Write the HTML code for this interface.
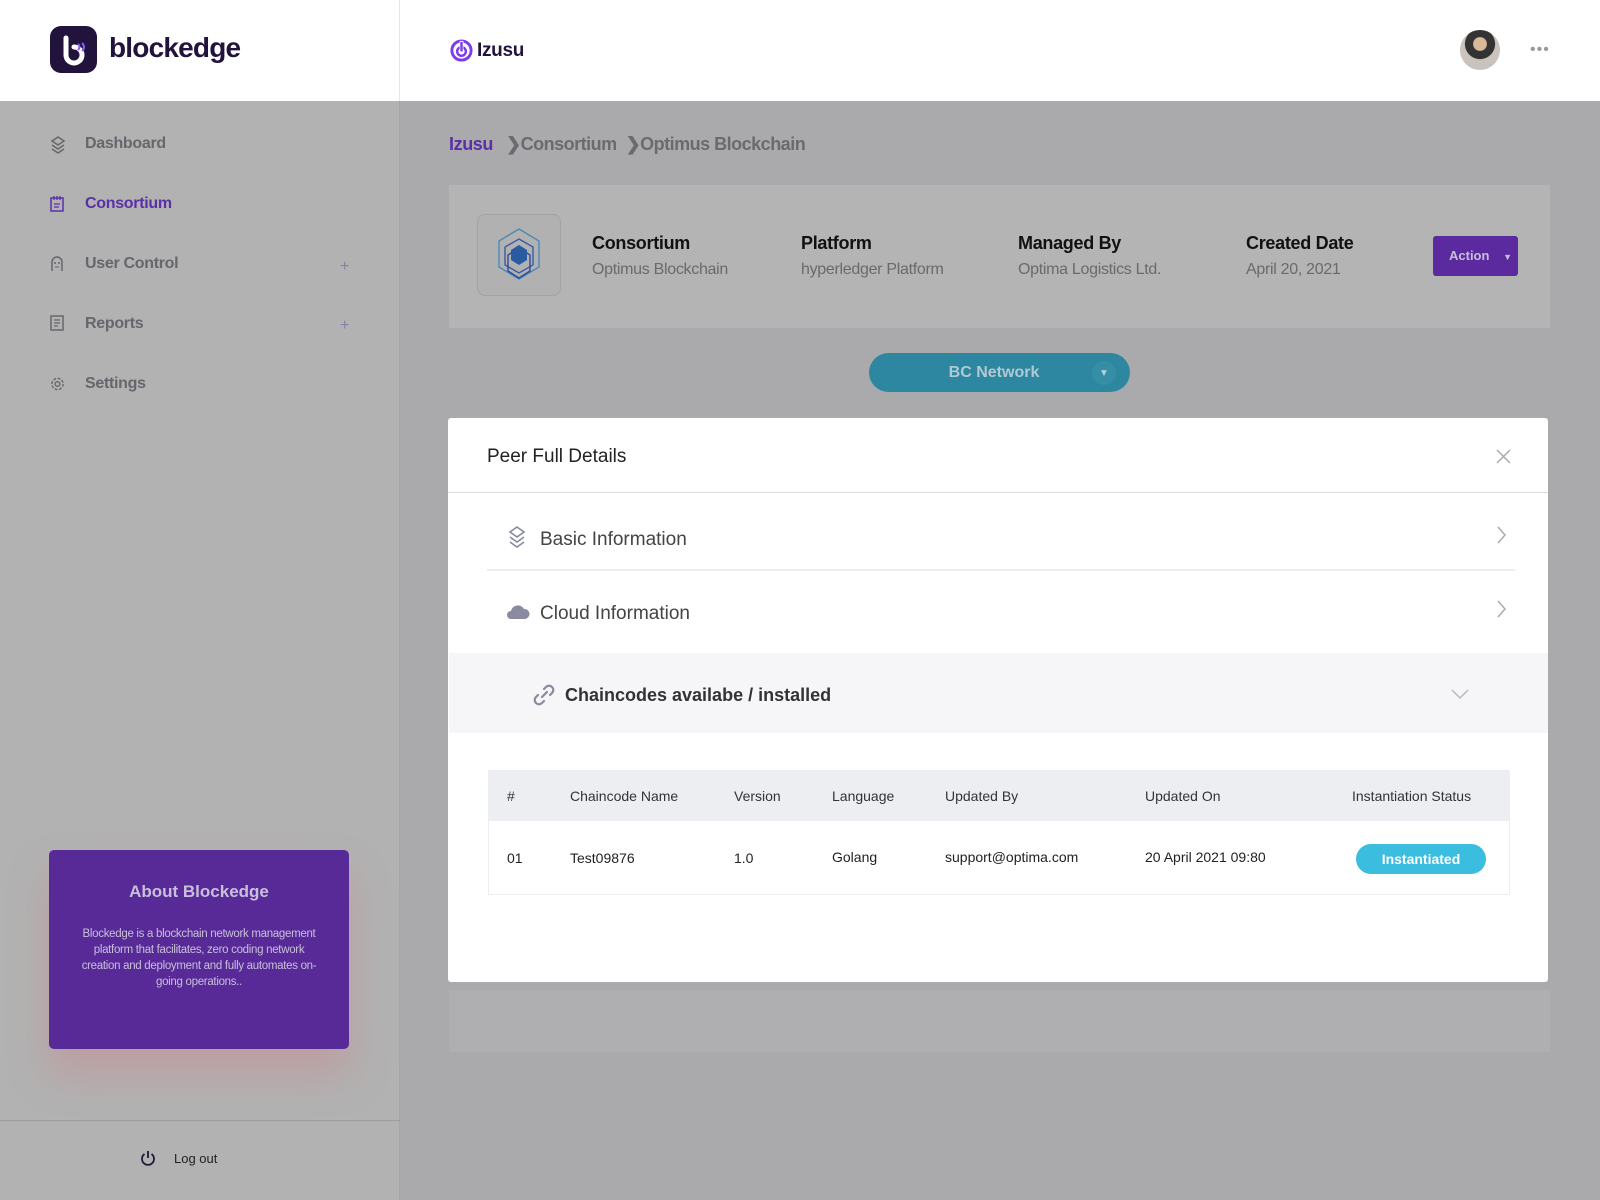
<!DOCTYPE html>
<html><head><meta charset="utf-8"><style>
*{box-sizing:border-box;margin:0;padding:0}
body{width:1600px;height:1200px;position:relative;overflow:hidden;font-family:"Liberation Sans",sans-serif;background:#aaaaad}
.abs{position:absolute}
.hdr{left:0;top:0;width:1600px;height:101px;background:#fff}
.side{left:0;top:101px;width:400px;height:1099px;background:#b2b2b2;border-right:1px solid #a6a6a8}
.nav{left:85px;font-size:16px;color:#66666c;font-weight:bold;transform:translateY(-50%);letter-spacing:-0.3px}
.nicon{left:50px;transform:translateY(-50%)}
.plus{left:340px;color:#8a80a6;font-size:16px;transform:translateY(-50%)}
.lbl{font-size:18px;font-weight:bold;color:#111;letter-spacing:-0.3px}
.val{font-size:16px;color:#6a6a6a;letter-spacing:-0.3px}
</style></head><body>
<div class="abs hdr"></div>
<div class="abs" style="left:399px;top:0;width:1px;height:101px;background:#e6e6e6"></div>
<div class="abs" style="left:50px;top:26px;width:47px;height:47px;border-radius:11px;background:#22133d"></div>
<svg class="abs" style="left:50px;top:26px" width="47" height="47" viewBox="0 0 47 47"><path d="M16 12v17a8 8 0 1 0 8-8" fill="none" stroke="#fff" stroke-width="5" stroke-linecap="round"/><path d="M28 18q3 3 0 6M32 17q4 4 0 8" fill="none" stroke="#8b5cf6" stroke-width="2"/></svg>
<div class="abs" style="left:109px;top:32px;font-size:28px;font-weight:bold;color:#22133d;letter-spacing:-0.8px">blockedge</div>
<svg class="abs" style="left:449px;top:38px" width="25" height="25" viewBox="0 0 26 26"><circle cx="13" cy="13" r="10" fill="none" stroke="#7c3aed" stroke-width="3"/><circle cx="13" cy="14" r="4.5" fill="none" stroke="#7c3aed" stroke-width="2.5"/><path d="M13 3v10" stroke="#fff" stroke-width="4"/><path d="M13 4v10" stroke="#7c3aed" stroke-width="2.5"/></svg>
<div class="abs" style="left:477px;top:40px;font-size:19px;font-weight:bold;color:#22133d;letter-spacing:-0.3px">Izusu</div>
<div class="abs" style="left:1460px;top:30px;width:40px;height:40px;border-radius:50%;background:radial-gradient(circle at 50% 35%,#d9b89a 0 20%,#333 22% 45%,#c9c2bd 47%)"></div>
<div class="abs" style="left:1530px;top:41px;font-size:16px;color:#999;letter-spacing:1px">•••</div>

<div class="abs side"></div>
<svg class="abs nicon" style="top:145px" width="16" height="18" viewBox="0 0 16 18"><path d="M8 1l6 4-6 4-6-4z M2 9l6 4 6-4 M2 13l6 4 6-4" fill="none" stroke="#66666c" stroke-width="1.5"/></svg>
<div class="abs nav" style="top:144px">Dashboard</div>
<svg class="abs nicon" style="top:204px" width="14" height="16" viewBox="0 0 14 16"><rect x="1" y="2" width="12" height="13" fill="none" stroke="#5b2fa8" stroke-width="1.5"/><path d="M4 0v4M7 0v4M10 0v4M4 8h6M4 11h5" stroke="#5b2fa8" stroke-width="1.3"/></svg>
<div class="abs nav" style="top:204px;color:#5b2fa8">Consortium</div>
<svg class="abs nicon" style="top:264px" width="14" height="16" viewBox="0 0 14 16"><path d="M2 15V6a5 5 0 0 1 10 0v9" fill="none" stroke="#66666c" stroke-width="1.5"/><circle cx="5" cy="7" r="1" fill="#66666c"/><circle cx="9" cy="7" r="1" fill="#66666c"/><path d="M5 11h4" stroke="#66666c"/></svg>
<div class="abs nav" style="top:264px">User Control</div>
<div class="abs plus" style="top:267px">+</div>
<svg class="abs nicon" style="top:323px" width="14" height="16" viewBox="0 0 14 16"><rect x="1" y="1" width="12" height="14" fill="none" stroke="#66666c" stroke-width="1.5"/><path d="M4 5h6M4 8h6M4 11h4" stroke="#66666c" stroke-width="1.3"/></svg>
<div class="abs nav" style="top:324px">Reports</div>
<div class="abs plus" style="top:326px">+</div>
<svg class="abs nicon" style="top:384px" width="15" height="15" viewBox="0 0 16 16"><circle cx="8" cy="8" r="2.5" fill="none" stroke="#66666c" stroke-width="1.5"/><circle cx="8" cy="8" r="6" fill="none" stroke="#66666c" stroke-width="1.5" stroke-dasharray="3 1.7"/></svg>
<div class="abs nav" style="top:384px">Settings</div>

<div class="abs" style="left:49px;top:850px;width:300px;height:199px;border-radius:5px;background:#572a98;box-shadow:0 25px 40px rgba(210,120,130,.35)"></div>
<div class="abs" style="left:49px;top:882px;width:300px;text-align:center;font-size:17px;font-weight:bold;color:#c9bfd9">About Blockedge</div>
<div class="abs" style="left:79px;top:926px;width:240px;text-align:center;font-size:11.5px;line-height:16px;color:#c9bfd9;letter-spacing:-0.3px">Blockedge is a blockchain network management platform that facilitates, zero coding network creation and deployment and fully automates on-going operations..</div>
<div class="abs" style="left:0;top:1120px;width:400px;height:1px;background:#9d9d9f"></div>
<svg class="abs" style="left:140px;top:1150px" width="16" height="17" viewBox="0 0 16 17"><path d="M4.5 4a6 6 0 1 0 7 0" fill="none" stroke="#1e1a3a" stroke-width="1.8"/><path d="M8 1v7" stroke="#1e1a3a" stroke-width="1.8"/></svg>
<div class="abs" style="left:174px;top:1151px;font-size:13px;color:#222">Log out</div>

<div class="abs" style="left:449px;top:134px;font-size:18px;font-weight:bold;color:#5b2fa8;letter-spacing:-0.4px">Izusu</div>
<div class="abs" style="left:506px;top:134px;font-size:18px;font-weight:bold;color:#6a6a70;letter-spacing:-0.5px">❯Consortium &nbsp;❯Optimus Blockchain</div>
<div class="abs" style="left:449px;top:185px;width:1101px;height:143px;background:#b4b4b5"></div>
<div class="abs" style="left:477px;top:214px;width:84px;height:82px;border:1px solid #a3a3a5;border-radius:8px;background:#b1b1b2"></div>
<svg class="abs" style="left:490px;top:225px" width="58" height="62" viewBox="0 0 58 62"><g fill="none" stroke-width="1.4"><path d="M29 4l20 12v26L29 54 9 42V16z" stroke="#4a8ab8"/><path d="M29 14l14 8v18l-14 8-14-8V22z" stroke="#3a5aa8"/><path d="M18 22l11-7 11 7v16l-11 7-11-7z" stroke="#2f4b9a" transform="translate(0,8)"/></g><path d="M29 20l8 5v10l-8 5-8-5V25z" fill="#2a5aa0"/></svg>
<div class="abs lbl" style="left:592px;top:233px">Consortium</div><div class="abs val" style="left:592px;top:261px">Optimus Blockchain</div>
<div class="abs lbl" style="left:801px;top:233px">Platform</div><div class="abs val" style="left:801px;top:261px">hyperledger Platform</div>
<div class="abs lbl" style="left:1018px;top:233px">Managed By</div><div class="abs val" style="left:1018px;top:261px">Optima Logistics Ltd.</div>
<div class="abs lbl" style="left:1246px;top:233px">Created Date</div><div class="abs val" style="left:1246px;top:261px">April 20, 2021</div>
<div class="abs" style="left:1433px;top:236px;width:85px;height:40px;border-radius:3px;background:#5a2a9e;color:#c9bfd9;font-size:13px;font-weight:bold;padding:12px 0 0 16px">Action <span style="font-size:9px;margin-left:10px">▼</span></div>
<div class="abs" style="left:869px;top:353px;width:261px;height:39px;border-radius:20px;background:#2e87a0"></div>
<div class="abs" style="left:869px;top:364px;width:250px;text-align:center;font-size:16px;font-weight:bold;color:#b0c9d3">BC Network</div>
<div class="abs" style="left:1092px;top:361px;width:24px;height:24px;border-radius:50%;background:#338ea6;color:#b7cfd9;font-size:10px;text-align:center;line-height:26px">▼</div>
<div class="abs" style="left:449px;top:990px;width:1101px;height:62px;background:#afafb1"></div>

<div class="abs" style="left:448px;top:418px;width:1100px;height:564px;background:#fff;border-radius:3px"></div>
<div class="abs" style="left:487px;top:446px;font-size:19px;color:#222">Peer Full Details</div>
<svg class="abs" style="left:1496px;top:449px" width="15" height="15" viewBox="0 0 15 15"><path d="M1 1l13 13M14 1L1 14" stroke="#aaa" stroke-width="1.5"/></svg>
<div class="abs" style="left:448px;top:492px;width:1100px;height:1px;background:#dcdcdc"></div>
<svg class="abs" style="left:507px;top:525px" width="20" height="24" viewBox="0 0 20 24"><path d="M10 2l7 5-7 5-7-5z M3 12l7 5 7-5 M3 17l7 5 7-5" fill="none" stroke="#8a8aa0" stroke-width="1.6"/></svg>
<div class="abs" style="left:540px;top:529px;font-size:19px;color:#444">Basic Information</div>
<svg class="abs" style="left:1497px;top:526px" width="10" height="18" viewBox="0 0 10 18"><path d="M1 1l7 8-7 8" fill="none" stroke="#aaa" stroke-width="1.5"/></svg>
<div class="abs" style="left:487px;top:569px;width:1028px;height:2px;background:#eeeef0"></div>
<svg class="abs" style="left:506px;top:602px" width="24" height="18" viewBox="0 0 24 18"><path d="M5 17a4 4 0 0 1 0-8 7 7 0 0 1 13-2 5 5 0 0 1 1 10z" fill="#8a8aa0"/></svg>
<div class="abs" style="left:540px;top:603px;font-size:19px;color:#444">Cloud Information</div>
<svg class="abs" style="left:1497px;top:600px" width="10" height="18" viewBox="0 0 10 18"><path d="M1 1l7 8-7 8" fill="none" stroke="#aaa" stroke-width="1.5"/></svg>
<div class="abs" style="left:449px;top:653px;width:1099px;height:80px;background:#f6f6f8"></div>
<svg class="abs" style="left:532px;top:683px" width="24" height="24" viewBox="0 0 24 24"><g fill="none" stroke="#8a8aa0" stroke-width="2.2" stroke-linecap="round"><path d="M10 14l5-5"/><path d="M12 6l2-2a4 4 0 0 1 6 6l-2 2"/><path d="M12 18l-2 2a4 4 0 0 1-6-6l2-2"/></g></svg>
<div class="abs" style="left:565px;top:685px;font-size:18px;font-weight:bold;color:#333">Chaincodes availabe / installed</div>
<svg class="abs" style="left:1451px;top:688px" width="18" height="12" viewBox="0 0 18 12"><path d="M1 2l8 8 8-8" fill="none" stroke="#bbb" stroke-width="1.5"/></svg>

<div class="abs" style="left:488px;top:770px;width:1022px;height:125px;border:1px solid #eceef2"></div>
<div class="abs" style="left:488px;top:770px;width:1022px;height:51px;background:#eceef2"></div>
<div class="abs" style="left:507px;top:788px;font-size:14px;color:#333">#</div>
<div class="abs" style="left:570px;top:788px;font-size:14px;color:#333">Chaincode Name</div>
<div class="abs" style="left:734px;top:788px;font-size:14px;color:#333">Version</div>
<div class="abs" style="left:832px;top:788px;font-size:14px;color:#333">Language</div>
<div class="abs" style="left:945px;top:788px;font-size:14px;color:#333">Updated By</div>
<div class="abs" style="left:1145px;top:788px;font-size:14px;color:#333">Updated On</div>
<div class="abs" style="left:1352px;top:788px;font-size:14px;color:#333">Instantiation Status</div>
<div class="abs" style="left:507px;top:850px;font-size:14px;color:#222">01</div>
<div class="abs" style="left:570px;top:850px;font-size:14px;color:#222">Test09876</div>
<div class="abs" style="left:734px;top:850px;font-size:14px;color:#222">1.0</div>
<div class="abs" style="left:832px;top:849px;font-size:14px;color:#222">Golang</div>
<div class="abs" style="left:945px;top:849px;font-size:14px;color:#222">support@optima.com</div>
<div class="abs" style="left:1145px;top:849px;font-size:14px;color:#222">20 April 2021 09:80</div>
<div class="abs" style="left:1356px;top:844px;width:130px;height:30px;border-radius:15px;background:#3bbde0;color:#fff;font-size:14px;font-weight:bold;text-align:center;line-height:30px">Instantiated</div>
</body></html>
